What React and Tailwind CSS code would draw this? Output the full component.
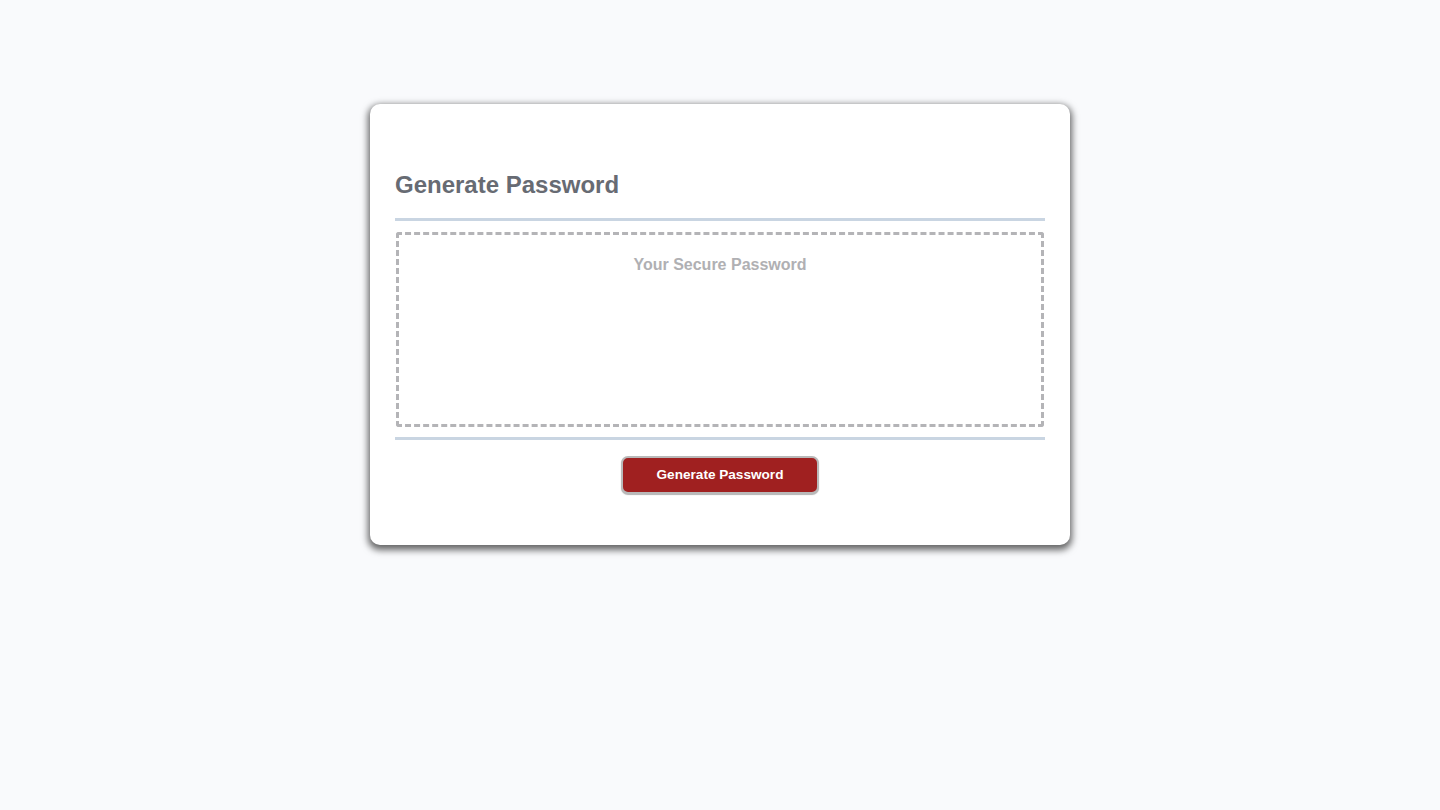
import React from "react";

export default function App() {
  return (
    <div
      className="min-h-[810px] w-full bg-[#f9fafc] flex justify-center"
      style={{ fontFamily: '"Liberation Sans", Arial, sans-serif' }}
    >
      <div className="mt-[104px] w-[700px] h-[441px] bg-white rounded-[10px] shadow-[0_3px_7px_2px_rgba(0,0,0,0.6)] px-[25px] pt-[67px] flex flex-col">
        <h2 className="text-[24px] leading-[28px] font-bold text-[#676b73] m-0">
          Generate Password
        </h2>
        <div className="mt-[19px] h-[3px] bg-[#c9d5e2]" />
        <div className="mt-[11px] mx-[1px] h-[195px] border-[3px] border-dashed border-[#b4b4b7] rounded-[3px] flex justify-center pt-[20px]">
          <span className="text-[16px] leading-[20px] font-bold text-[#b0b0b3]">
            Your Secure Password
          </span>
        </div>
        <div className="mt-[10px] h-[3px] bg-[#c9d5e2]" />
        <div className="flex justify-center mt-[16px]">
          <button className="w-[198px] h-[38px] bg-[#a02020] text-white text-[13.6px] font-bold rounded-[7px] border-2 border-[#b9b9b9] shadow-[0_1px_1px_rgba(0,0,0,0.3)]">
            Generate Password
          </button>
        </div>
      </div>
    </div>
  );
}
